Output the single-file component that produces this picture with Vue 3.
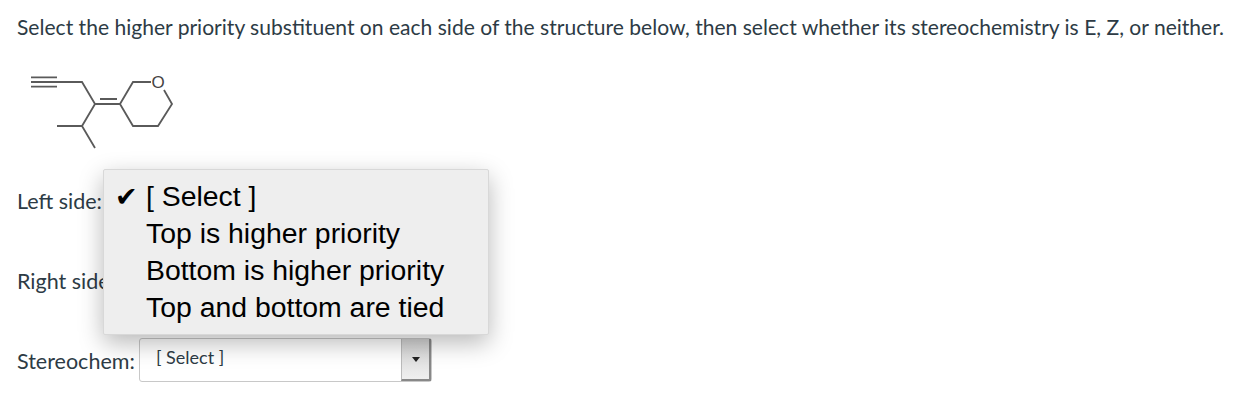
<template>
  <div class="question">
    <p class="prompt">Select the higher priority substituent on each side of the structure below, then select whether its stereochemistry is E, Z, or neither.</p>

    <svg class="molecule" width="200" height="100" viewBox="0 60 200 100" fill="none" stroke="#5a5a5a" stroke-width="1.8">
      <path d="M31 77.3H57M31 82H57M31 86.7H57" />
      <path d="M57 82H82L95 104" />
      <path d="M95 104H120M100 99H117" />
      <path d="M120 104L133 82H151M164 90L172 104L158 126H133L120 104" />
      <path d="M95 104L82 126H57M82 126L95 148" />
      <text x="158" y="88" class="atom">O</text>
    </svg>

    <div class="rows">
      <div v-for="row in rows" :key="row.label" class="row">
        <span class="label">{{ row.label }}:</span>
        <div class="select">
          <!-- the open menu covers the first two values -->
          <span class="select-value">{{ row.value }}</span>
          <span class="select-btn"><i class="caret" /></span>
        </div>
      </div>

      <ul class="menu">
        <li v-for="(opt, i) in options" :key="opt">
          <span class="tick">{{ i === 0 ? '✔' : '' }}</span>{{ opt }}
        </li>
      </ul>
    </div>
  </div>
</template>

<script setup>
const rows = [
  { label: 'Left side', value: '' },
  { label: 'Right side', value: '' },
  { label: 'Stereochem', value: '[ Select ]' },
]

const options = [
  '[ Select ]',
  'Top is higher priority',
  'Bottom is higher priority',
  'Top and bottom are tied',
]
</script>

<style>
html,
body {
  margin: 0;
  background: #fff;
}
</style>

<style scoped>
.question {
  width: 1246px;
  height: 408px;
  padding: 15px 0 0 17px;
  box-sizing: border-box;
  font-family: Lato, sans-serif;
  font-size: 21.07px;
  color: #2d3b45;
  overflow: hidden;
}

.prompt {
  margin: 0;
  line-height: 24px;
  white-space: nowrap;
}

.molecule {
  display: block;
  margin: 21px 0 0 -17px;
}

.atom {
  font-family: 'Liberation Sans', sans-serif;
  font-size: 17px;
  fill: #444;
  stroke: none;
  text-anchor: middle;
}

.rows {
  position: relative;
  margin-top: 18px;
  display: flex;
  flex-direction: column;
  gap: 36px;
}

.row {
  display: flex;
  align-items: flex-start;
  gap: 4px;
  height: 44px;
}

.label {
  width: 118px;
  flex: none;
  line-height: 24px;
  padding-top: 11px;
  white-space: nowrap;
  font-size: 21.5px;
}

.select {
  width: 293px;
  height: 44px;
  box-sizing: border-box;
  display: flex;
  justify-content: space-between;
  background: #fff;
  border: 1px solid #c8c8c8;
  border-radius: 3px;
}

.select-value {
  font-size: 18px;
  line-height: 36px;
  padding-left: 16px;
}

.select-btn {
  width: 30px;
  display: flex;
  align-items: center;
  justify-content: center;
  background: linear-gradient(#d2d2d2, #efefef);
  border-left: 1px solid #bbb;
  border-right: 2px solid #888;
  border-bottom: 2px solid #888;
  box-sizing: border-box;
}

.caret {
  border-left: 4px solid transparent;
  border-right: 4px solid transparent;
  border-top: 5px solid #222;
}

.menu {
  position: absolute;
  left: 86px;
  top: -9px;
  width: 386px;
  height: 166px;
  box-sizing: border-box;
  margin: 0;
  padding: 8px 0 0;
  list-style: none;
  background: #eee;
  border: 1px solid #d8d8d8;
  border-radius: 2px;
  box-shadow: 0 8px 24px rgba(0, 0, 0, 0.28);
  font-family: 'Liberation Sans', sans-serif;
  font-size: 28.4px;
  line-height: 37px;
  color: #000;
}

.menu li {
  display: flex;
  white-space: nowrap;
}

.tick {
  width: 42px;
  padding-left: 11px;
  box-sizing: border-box;
  font-family: 'DejaVu Sans', sans-serif;
  font-size: 27px;
}
</style>
